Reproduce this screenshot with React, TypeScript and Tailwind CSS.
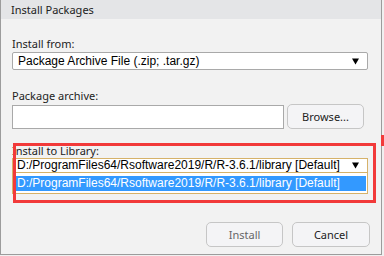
import React from "react";

const Arrow = () => (
  <svg width="7" height="7" viewBox="0 0 7 7" className="shrink-0">
    <path d="M0 0.5 H7 L3.5 6.5 Z" fill="#000" />
  </svg>
);

export default function App() {
  return (
    <div className="relative w-[384px] h-[256px] bg-[#f0f0f0] overflow-hidden">
      <div className="w-[382px] h-[255px] bg-[#f2f2f2] border-l border-r border-b border-[#9c9c9c] flex flex-col">
        <div className="h-[19px] shrink-0 bg-[#e4e5e7] pl-[10px] flex items-center text-[11px] leading-[14px] text-[#222] font-['Noto_Sans',sans-serif]">
          Install Packages
        </div>
        <div className="flex flex-col pl-[11px] pr-[13px]">
          <div className="mt-[17px] h-[15px] shrink-0 text-[11px] leading-[15px] text-[#222] font-['Noto_Sans',sans-serif]">
            Install from:
          </div>
          <div className="mt-[1px] h-[18px] shrink-0 bg-white border border-[#a9a9a9] rounded-[2px] flex items-center pl-[5px] pr-[8px] text-[12px] leading-[14px] text-black font-['Liberation_Sans',Arial,sans-serif]">
            <span className="flex-1">Package Archive File (.zip; .tar.gz)</span>
            <Arrow />
          </div>
          <div className="mt-[18px] h-[15px] shrink-0 text-[11px] leading-[15px] text-[#222] font-['Noto_Sans',sans-serif]">
            Package archive:
          </div>
          <div className="mt-[1px] h-[25px] shrink-0 flex items-start gap-[3px]">
            <div className="w-[272px] h-[24px] mt-[1px] bg-white border border-[#a9a9a9]" />
            <button className="w-[77px] h-[25px] rounded-[5px] border border-[#c6c6c6] bg-[#f4f4f6] text-[11px] leading-[14px] text-[#222] font-['Noto_Sans',sans-serif]">
              Browse...
            </button>
          </div>
          <div className="mt-[14px] h-[15px] shrink-0 text-[11px] leading-[15px] text-[#222] font-['Noto_Sans',sans-serif]">
            Install to Library:
          </div>
          <div className="h-[15px] shrink-0 bg-white border border-[#d6b26a] flex items-center pl-[4px] pr-[8px] text-[12px] leading-[13px] text-black font-['Liberation_Sans',Arial,sans-serif]">
            <span className="flex-1 whitespace-nowrap">D:/ProgramFiles64/Rsoftware2019/R/R-3.6.1/library [Default]</span>
            <Arrow />
          </div>
          <div className="h-[21px] shrink-0 bg-white border border-t-0 border-[#d6b26a] px-[1px] pt-[3px] pb-[2px]">
            <div className="h-[15px] bg-[#3399ff] text-white pl-[3px] flex items-center text-[12px] leading-[13px] whitespace-nowrap font-['Liberation_Sans',Arial,sans-serif]">
              D:/ProgramFiles64/Rsoftware2019/R/R-3.6.1/library [Default]
            </div>
          </div>
          <div className="mt-[28px] h-[25px] shrink-0 flex justify-end gap-[9px] mr-[-2px]">
            <button className="w-[77px] h-[25px] rounded-[5px] border border-[#c6c6c6] bg-[#f4f4f6] text-[11px] leading-[14px] text-[#666] font-['Noto_Sans',sans-serif]">
              Install
            </button>
            <button className="w-[78px] h-[25px] rounded-[5px] border border-[#c6c6c6] bg-[#f4f4f6] text-[11px] leading-[14px] text-[#222] font-['Noto_Sans',sans-serif]">
              Cancel
            </button>
          </div>
        </div>
      </div>
      <div className="absolute left-[13px] top-[143px] w-[363px] h-[60px] border-[3px] border-[#f23a3a] pointer-events-none" />
      <div className="absolute left-[381px] top-[135px] w-[3px] h-[11px] bg-[#f23a3a]" />
    </div>
  );
}
